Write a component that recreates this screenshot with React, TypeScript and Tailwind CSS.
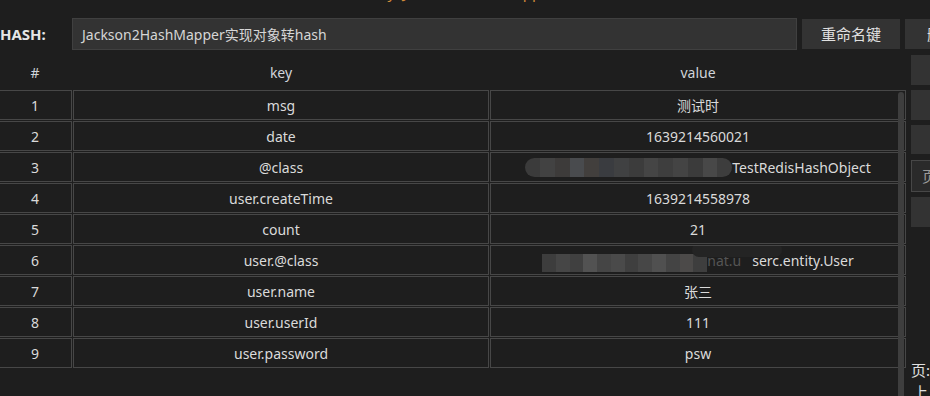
import React from 'react';

type Row = { id: number; key: string; value: React.ReactNode };

const font = { fontFamily: '"Noto Sans", "Noto Sans CJK SC", sans-serif' };

// mosaic strips used to hide part of the class names
const strips1 = ['#3b3b3b', '#424242', '#3d3b3a', '#494b4e', '#423f3d', '#3a3c40', '#404142', '#3c3c3c', '#454545', '#3e3e3e', '#444444', '#3b3b3b', '#484848', '#3d3d3d'];
const strips2 = ['#3d3d3d', '#464646', '#404040', '#525252', '#454545', '#4a4a4a', '#3f3f3f', '#474747', '#505050', '#444444', '#4c4a49', '#3e3e3e'];

const Mosaic: React.FC<{ colors: string[]; className: string }> = ({ colors, className }) => (
  <div className={`flex overflow-hidden ${className}`}>
    {colors.map((c, i) => (
      <div key={i} className="flex-1 h-full" style={{ backgroundColor: c }} />
    ))}
  </div>
);

const rows: Row[] = [
  { id: 1, key: 'msg', value: '测试时' },
  { id: 2, key: 'date', value: '1639214560021' },
  {
    id: 3,
    key: '@class',
    value: (
      <span className="flex items-center">
        <Mosaic colors={strips1} className="w-[207px] h-[19px] rounded-full" />
        <span>TestRedisHashObject</span>
      </span>
    ),
  },
  { id: 4, key: 'user.createTime', value: '1639214558978' },
  { id: 5, key: 'count', value: '21' },
  {
    id: 6,
    key: 'user.@class',
    value: (
      <span className="flex items-center relative">
        <Mosaic colors={strips2} className="w-[165px] h-[18px] mt-[6px]" />
        <span className="text-[#555555] w-[45px] overflow-hidden whitespace-nowrap">nat.u</span>
        <span>serc.entity.User</span>
        <span className="absolute left-[150px] -top-[5px] w-[90px] h-[14px] rounded-full bg-[#242424]" />
      </span>
    ),
  },
  { id: 7, key: 'user.name', value: '张三' },
  { id: 8, key: 'user.userId', value: '111' },
  { id: 9, key: 'user.password', value: 'psw' },
];

const cell = 'h-[30px] border border-[#474747] flex items-center justify-center overflow-hidden whitespace-nowrap';

export default function App() {
  return (
    <div className="w-[930px] h-[396px] overflow-hidden bg-[#1e1e1e] text-[#dadada] relative" style={font}>
      {/* window title, only its descenders show */}
      <div className="h-[18px] relative overflow-hidden">
        <div className="absolute -top-[18px] left-[370px] text-[15px] leading-[20px] text-[#d08a3a] whitespace-nowrap">
          Key: Jackson2HashMapper
        </div>
      </div>

      {/* hash name row */}
      <div className="flex items-center h-[32px]">
        <div className="w-[72px] shrink-0 pr-[30px] text-right font-bold text-[15px] text-[#e6e6e6] whitespace-nowrap">
          HASH:
        </div>
        <div className="w-[725px] shrink-0 h-[32px] bg-[#333333] border border-[#404040] flex items-center pl-[9px] text-[14px] text-[#d6d6d6]">
          Jackson2HashMapper实现对象转hash
        </div>
        <div className="ml-[5px] w-[98px] shrink-0 h-[30px] bg-[#333333] text-[15px] text-[#e0e0e0] flex items-center justify-center">
          重命名键
        </div>
        <div className="ml-[5px] w-[90px] h-[30px] shrink-0 bg-[#333333] text-[15px] text-[#e0e0e0] flex items-center pl-[22px] whitespace-nowrap">
          删除
        </div>
      </div>

      <div className="flex mt-[5px]">
        {/* data grid */}
        <div className="w-[911px] shrink-0 relative">
          <div className="-ml-[2px] grid grid-cols-[74px_416px_416px] gap-px text-[14px]">
            <div className="h-[34px] flex items-center justify-center text-[#d0d4da]">#</div>
            <div className="h-[34px] flex items-center justify-center text-[#d0d4da]">key</div>
            <div className="h-[34px] flex items-center justify-center text-[#d0d4da]">value</div>
            {rows.map((r) => (
              <React.Fragment key={r.id}>
                <div className={cell}>{r.id}</div>
                <div className={cell}>{r.key}</div>
                <div className={cell}>{r.value}</div>
              </React.Fragment>
            ))}
          </div>
          {/* vertical scrollbar thumb */}
          <div className="absolute left-[898px] top-[37px] w-[6px] h-[320px] rounded-t-full bg-[#3e3e3e]" />
        </div>

        {/* right side buttons */}
        <div className="flex flex-col w-[60px] shrink-0 text-[15px]">
          <div className="h-[30px] bg-[#333333]" />
          <div className="h-[30px] mt-[5px] bg-[#333333]" />
          <div className="h-[29px] mt-[5px] bg-[#333333]" />
          <div className="h-[32px] mt-[6px] bg-[#2a2a2a] border border-[#474747] flex items-center pl-[10px] text-[#9a9a9a] whitespace-nowrap">
            页码
          </div>
          <div className="h-[30px] mt-[5px] bg-[#333333]" />
          <div className="mt-[133px] leading-[20px] text-[#e0e0e0] whitespace-nowrap">页:</div>
          <div className="mt-[2px] pl-[2px] leading-[20px] text-[#e0e0e0]">上</div>
        </div>
      </div>
    </div>
  );
}
